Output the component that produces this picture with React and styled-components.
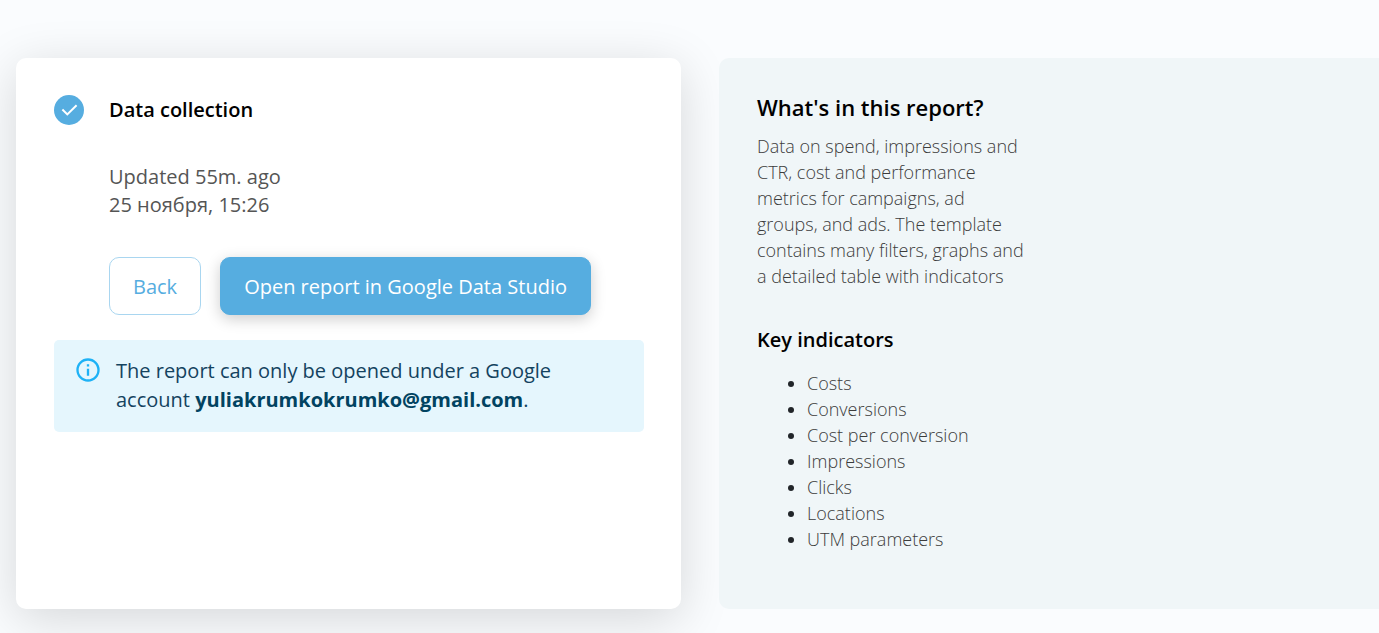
import styled, { createGlobalStyle } from "styled-components";

const GlobalStyle = createGlobalStyle`
    * {
        box-sizing: border-box;
    }

    body {
        margin: 0;
        background-color: #fafcfe;
        color: #000;
        font-family: "Open Sans", sans-serif;
        overflow-x: hidden;
    }
`

const StyledPage = styled.main`
    display: grid;
    grid-template-columns: minmax(0, 665fr) minmax(0, 660fr);
    gap: 38px;
    padding: 58px 0 24px 16px;
`

const StyledCard = styled.section`
    min-height: 551px;
    padding: 37px 37px 37px 38px;
    border-radius: 10px;
    background-color: #fff;
    box-shadow: 0 10px 50px rgba(0, 0, 0, .15);
`

const StyledCardHeader = styled.header`
    display: flex;
    align-items: center;
    gap: 25px;

    & h1 {
        margin: 0;
        font-size: 20px;
        font-weight: 600;
        line-height: 30px;
    }
`

const StyledCardBody = styled.div`
    padding-left: 55px;
`

const StyledUpdated = styled.p`
    margin: 38px 0;
    color: #555;
    font-size: 20px;
    line-height: 28px;
`

const StyledActions = styled.div`
    display: flex;
    gap: 19px;
    margin-bottom: 25px;
`

const StyledButton = styled.button`
    height: 58px;
    padding: 0 23px;
    border: 1px solid ${({ $primary }) => ($primary ? "#56ade0" : "#a9d6f0")};
    border-radius: 10px;
    background-color: ${({ $primary }) => ($primary ? "#56ade0" : "#fff")};
    box-shadow: ${({ $primary }) => ($primary ? "0 4px 15px rgba(0, 0, 0, .2)" : "none")};
    color: ${({ $primary }) => ($primary ? "#fff" : "#56ade0")};
    font-family: inherit;
    font-size: 20px;
    cursor: pointer;
`

const StyledNotice = styled.div`
    display: flex;
    align-items: flex-start;
    gap: 14px;
    padding: 16px 20px 18px;
    border-radius: 5px;
    background-color: #e5f6fd;
    color: #14435f;

    & svg {
        flex: none;
    }

    & p {
        margin: 0;
        font-size: 20px;
        line-height: 29px;
    }

    & b {
        color: #014361;
    }
`

const StyledInfo = styled.aside`
    padding: 35px 38px;
    border-radius: 10px 0 0 10px;
    background-color: #f0f6f8;

    & h2 {
        margin: 0 0 12px;
        font-size: 22px;
        font-weight: 600;
        line-height: 28px;
    }

    & p {
        max-width: 272px;
        margin: 0 0 37px;
        color: #3c3c3c;
        font-size: 18px;
        font-weight: 300;
        line-height: 26px;
    }

    & h3 {
        margin: 0 0 16px;
        font-size: 20px;
        font-weight: 600;
        line-height: 28px;
    }
`

const StyledIndicators = styled.ul`
    margin: 0;
    padding-left: 50px;

    & li {
        color: #3c3c3c;
        font-size: 18px;
        font-weight: 300;
        line-height: 26px;

        &::marker {
            color: #212529;
        }
    }
`

const indicators = [
    "Costs",
    "Conversions",
    "Cost per conversion",
    "Impressions",
    "Clicks",
    "Locations",
    "UTM parameters",
];

const CheckIcon = () => (
    <svg width="30" height="30" viewBox="0 0 30 30" aria-hidden="true">
        <circle cx="15" cy="15" r="15" fill="#56ade0" />
        <path d="M8.4 14.5l4.9 4.9L22.6 10.2" fill="none" stroke="#fff" strokeWidth="2" />
    </svg>
)

const InfoIcon = () => (
    <svg width="28" height="28" viewBox="0 0 24 24" fill="#1eb2f6" aria-hidden="true">
        <path d="M11,9H13V7H11M12,20C7.59,20 4,16.41 4,12C4,7.59 7.59,4 12,4C16.41,4 20,7.59 20,12C20,16.41 16.41,20 12,20M12,2A10,10 0 0,0 2,12A10,10 0 0,0 12,22A10,10 0 0,0 22,12A10,10 0 0,0 12,2M11,17H13V11H11V17Z" />
    </svg>
)

const App = () => {
    return (
        <>
            <GlobalStyle />
            <StyledPage>
                <StyledCard>
                    <StyledCardHeader>
                        <CheckIcon />
                        <h1>Data collection</h1>
                    </StyledCardHeader>
                    <StyledCardBody>
                        <StyledUpdated>
                            Updated 55m. ago
                            <br />
                            25 ноября, 15:26
                        </StyledUpdated>
                        <StyledActions>
                            <StyledButton type="button">Back</StyledButton>
                            <StyledButton type="button" $primary>Open report in Google Data Studio</StyledButton>
                        </StyledActions>
                    </StyledCardBody>
                    <StyledNotice>
                        <InfoIcon />
                        <p>
                            The report can only be opened under a Google account <b>yuliakrumkokrumko@gmail.com</b>.
                        </p>
                    </StyledNotice>
                </StyledCard>
                <StyledInfo>
                    <h2>What's in this report?</h2>
                    <p>
                        Data on spend, impressions and CTR, cost and performance metrics for campaigns, ad
                        groups, and ads. The template contains many filters, graphs and a detailed table with
                        indicators
                    </p>
                    <h3>Key indicators</h3>
                    <StyledIndicators>
                        {indicators.map((indicator) => (
                            <li key={indicator}>{indicator}</li>
                        ))}
                    </StyledIndicators>
                </StyledInfo>
            </StyledPage>
        </>
    );
}

export default App;
